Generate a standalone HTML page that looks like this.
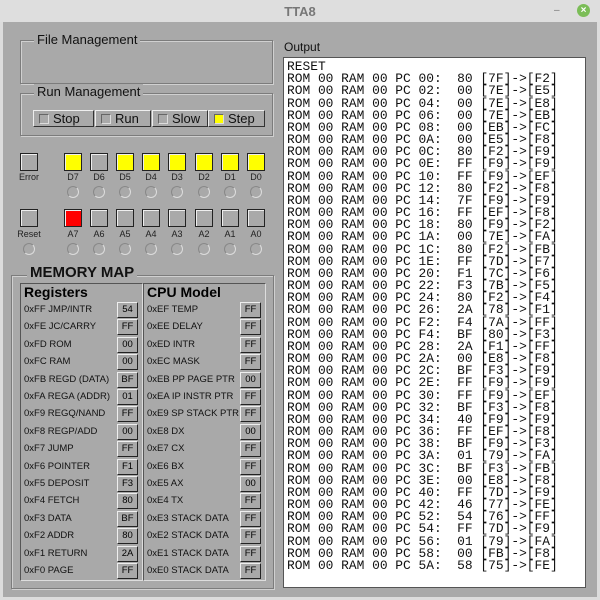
<!DOCTYPE html><html><head><style>
*{margin:0;padding:0;box-sizing:border-box}
body{width:600px;height:600px;background:#dcdcdc;font-family:"Liberation Sans",sans-serif;position:relative;overflow:hidden}
.a{position:absolute}
#tb{left:0;top:0;width:600px;height:22px;background:#dedede;text-align:center;font-weight:bold;font-size:13px;color:#777;line-height:24px}
#win{left:3px;top:22px;width:594px;height:575px;background:#a9a9a9}
.grp{border:1px solid #7c7c7c;box-shadow:inset 1px 1px 0 #d0d0d0,1px 1px 0 #d0d0d0}
.lg{position:absolute;background:#a9a9a9;padding:0 3px;font-size:13px;color:#111}
.btn{position:absolute;top:110px;height:17px;border:1px solid #333;border-top-color:#eee;border-left-color:#eee;background:#a9a9a9;font-size:13px;line-height:15px;color:#111}
.btn i{position:absolute;left:5px;top:3px;width:10px;height:10px;border:1px solid #666;border-right-color:#ddd;border-bottom-color:#ddd}
.btn span{position:absolute;left:19px}
.led{position:absolute;width:18px;height:18px;border:1px solid #222;box-shadow:inset 1px 1px 0 #eee;background:#a9a9a9}
.y{background:#ffff00}.r{background:#ff0000}
.lb{position:absolute;font-size:9px;color:#222;width:30px;text-align:center}
.c{position:absolute;width:12px;height:12px;border-radius:50%;border:1px solid #888;border-bottom-color:#ddd;border-right-color:#ddd}
#out{left:283px;top:57px;width:303px;height:531px;background:#fff;border:1px solid #555;font-family:"Liberation Mono",monospace;font-size:12.9px;color:#111}
#out div{position:absolute;left:3px;line-height:12px;white-space:pre}
.pn{position:absolute;border:1px solid #555;border-bottom-color:#ddd;border-right-color:#ddd}
.row{position:absolute;font-size:9.5px;color:#111;height:16px;line-height:16px}
.v{position:absolute;width:21px;height:16px;border:1px solid #222;border-top-color:#eee;border-left-color:#eee;font-size:9.5px;text-align:center;line-height:14px}
</style></head><body>
<div class="a" id="tb">TTA8</div>
<div class="a" style="left:554px;top:5px;font-size:10px;color:#777">–</div>
<div class="a" style="left:577px;top:4px;width:13px;height:13px;border-radius:50%;background:#7bbd57;color:#fff;font-size:10px;text-align:center;line-height:13px;font-weight:bold">×</div>
<div class="a" id="win"></div>
<div class="a grp" style="left:20px;top:40px;width:253px;height:44px"></div>
<div class="lg" style="left:34px;top:32px">File Management</div>
<div class="a grp" style="left:20px;top:93px;width:253px;height:43px"></div>
<div class="lg" style="left:34px;top:84px">Run Management</div>
<div class="btn" style="left:33px;width:61px"><i></i><span>Stop</span></div>
<div class="btn" style="left:95px;width:56px"><i></i><span>Run</span></div>
<div class="btn" style="left:152px;width:56px"><i></i><span>Slow</span></div>
<div class="btn" style="left:208px;width:57px"><i class="y"></i><span>Step</span></div>
<div class="a" style="left:284px;top:40px;font-size:12px;color:#111">Output</div>
<div id="led"></div>
<div class="a grp" style="left:11px;top:275px;width:263px;height:314px"></div>
<div class="lg" style="left:27px;top:264px;font-size:15px;font-weight:bold">MEMORY MAP</div>
<div class="pn" style="left:20px;top:283px;width:123px;height:298px"></div>
<div class="pn" style="left:143px;top:283px;width:123px;height:298px"></div>
<div class="a" style="left:24px;top:284px;font-size:14px;font-weight:bold">Registers</div>
<div class="a" style="left:147px;top:284px;font-size:14px;font-weight:bold">CPU Model</div>
<div id="mm"></div>
<div class="a" id="out"></div>
<script>
var T="RESET|00:  80 [7F]->[F2]|02:  00 [7E]->[E5]|04:  00 [7E]->[E8]|06:  00 [7E]->[EB]|08:  00 [EB]->[FC]|0A:  00 [E5]->[F8]|0C:  80 [F2]->[F9]|0E:  FF [F9]->[F9]|10:  FF [F9]->[EF]|12:  80 [F2]->[F8]|14:  7F [F9]->[F9]|16:  FF [EF]->[F8]|18:  80 [F9]->[F2]|1A:  00 [7E]->[FA]|1C:  80 [F2]->[FB]|1E:  FF [7D]->[F7]|20:  F1 [7C]->[F6]|22:  F3 [7B]->[F5]|24:  80 [F2]->[F4]|26:  2A [78]->[F1]|F2:  F4 [7A]->[FF]|F4:  BF [80]->[F3]|28:  2A [F1]->[FF]|2A:  00 [E8]->[F8]|2C:  BF [F3]->[F9]|2E:  FF [F9]->[F9]|30:  FF [F9]->[EF]|32:  BF [F3]->[F8]|34:  40 [F9]->[F9]|36:  FF [EF]->[F8]|38:  BF [F9]->[F3]|3A:  01 [79]->[FA]|3C:  BF [F3]->[FB]|3E:  00 [E8]->[F8]|40:  FF [7D]->[F9]|42:  46 [77]->[FE]|52:  54 [76]->[FF]|54:  FF [7D]->[F9]|56:  01 [79]->[FA]|58:  00 [FB]->[F8]|5A:  58 [75]->[FE]".split('|');
document.getElementById('out').innerHTML=T.map(function(s,i){return '<div style="top:'+(3+i*12.17).toFixed(2)+'px">'+(i?'ROM 00 RAM 00 PC '+s:s)+'</div>'}).join('');
var h='',xs=[20,64,90,116,142,168,195,221,247];
var d=['Error','D7','D6','D5','D4','D3','D2','D1','D0'],dc=['','y','','y','y','y','y','y','y'];
var a=['Reset','A7','A6','A5','A4','A3','A2','A1','A0'],ac=['','r','','','','','','',''];
xs.forEach(function(x,i){
h+='<div class="led '+dc[i]+'" style="left:'+x+'px;top:153px"></div><div class="lb" style="left:'+(x-6)+'px;top:172px">'+d[i]+'</div>';
if(i)h+='<div class="c" style="left:'+(x+3)+'px;top:186px"></div>';
h+='<div class="led '+ac[i]+'" style="left:'+x+'px;top:209px"></div><div class="lb" style="left:'+(x-6)+'px;top:229px">'+a[i]+'</div>';
h+='<div class="c" style="left:'+(x+3)+'px;top:243px"></div>';});
document.getElementById('led').innerHTML=h;
var L=[['0xFF JMP/INTR','54'],['0xFE JC/CARRY','FF'],['0xFD ROM','00'],['0xFC RAM','00'],['0xFB REGD (DATA)','BF'],['0xFA REGA (ADDR)','01'],['0xF9 REGQ/NAND','FF'],['0xF8 REGP/ADD','00'],['0xF7 JUMP','FF'],['0xF6 POINTER','F1'],['0xF5 DEPOSIT','F3'],['0xF4 FETCH','80'],['0xF3 DATA','BF'],['0xF2 ADDR','80'],['0xF1 RETURN','2A'],['0xF0 PAGE','FF']];
var R=[['0xEF TEMP','FF'],['0xEE DELAY','FF'],['0xED INTR','FF'],['0xEC MASK','FF'],['0xEB PP PAGE PTR','00'],['0xEA IP INSTR PTR','FF'],['0xE9 SP STACK PTR','FF'],['0xE8 DX','00'],['0xE7 CX','FF'],['0xE6 BX','FF'],['0xE5 AX','00'],['0xE4 TX','FF'],['0xE3 STACK DATA','FF'],['0xE2 STACK DATA','FF'],['0xE1 STACK DATA','FF'],['0xE0 STACK DATA','FF']];
h='';
for(var i=0;i<16;i++){var y=302+i*17.4;
h+='<div class="row" style="left:24px;top:'+y+'px">'+L[i][0]+'</div><div class="v" style="left:117px;top:'+y+'px">'+L[i][1]+'</div>';
h+='<div class="row" style="left:147px;top:'+y+'px">'+R[i][0]+'</div><div class="v" style="left:240px;top:'+y+'px">'+R[i][1]+'</div>';}
document.getElementById('mm').innerHTML=h;
</script>
</body></html>
